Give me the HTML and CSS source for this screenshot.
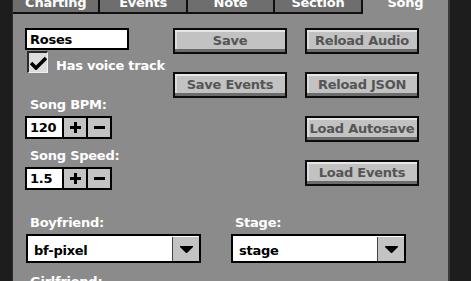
FILE: index.html
```html
<!DOCTYPE html>
<html>
<head>
<meta charset="utf-8">
<link rel="stylesheet" href="styles.css">
</head>
<body>
<div class="panel">
  <div class="tabs">
    <div class="tab"><span>Charting</span></div>
    <div class="tab"><span>Events</span></div>
    <div class="tab"><span>Note</span></div>
    <div class="tab"><span>Section</span></div>
    <div class="tab active"><span>Song</span></div>
  </div>
  <div class="body">
    <div class="top">
      <div class="col-left">
        <div class="textbox">Roses</div>
        <div class="check-row">
          <span class="checkbox">
            <svg width="17" height="14" viewBox="0 0 17 14"><path d="M1 7 L6 12 L16 2" fill="none" stroke="#000" stroke-width="3.6" stroke-linejoin="miter"/></svg>
          </span>
          <span class="label check-label">Has voice track</span>
        </div>
        <div class="label field-label first">Song BPM:</div>
        <div class="stepper">
          <div class="num">120</div>
          <div class="step"><svg width="11" height="11" viewBox="0 0 11 11"><path d="M4 0h3v4h4v3H7v4H4V7H0V4h4z" fill="#000"/></svg></div>
          <div class="step"><svg width="11" height="11" viewBox="0 0 11 11"><path d="M0 4h11v3H0z" fill="#000"/></svg></div>
        </div>
        <div class="label field-label">Song Speed:</div>
        <div class="stepper">
          <div class="num">1.5</div>
          <div class="step"><svg width="11" height="11" viewBox="0 0 11 11"><path d="M4 0h3v4h4v3H7v4H4V7H0V4h4z" fill="#000"/></svg></div>
          <div class="step"><svg width="11" height="11" viewBox="0 0 11 11"><path d="M0 4h11v3H0z" fill="#000"/></svg></div>
        </div>
      </div>
      <div class="col-btns">
        <div class="btn">Save</div>
        <div class="btn">Save Events</div>
      </div>
      <div class="col-btns">
        <div class="btn">Reload Audio</div>
        <div class="btn">Reload JSON</div>
        <div class="btn">Load Autosave</div>
        <div class="btn">Load Events</div>
      </div>
    </div>
    <div class="bottom">
      <div class="dd-field">
        <div class="label dd-label">Boyfriend:</div>
        <div class="dropdown">
          <div class="dd-value">bf-pixel</div>
          <div class="dd-btn"><svg width="13" height="7" viewBox="0 0 13 7"><path d="M0 0h13v1l-6 6h-1l-6-6z" fill="#000"/></svg></div>
        </div>
      </div>
      <div class="dd-field">
        <div class="label dd-label">Stage:</div>
        <div class="dropdown">
          <div class="dd-value">stage</div>
          <div class="dd-btn"><svg width="13" height="7" viewBox="0 0 13 7"><path d="M0 0h13v1l-6 6h-1l-6-6z" fill="#000"/></svg></div>
        </div>
      </div>
    </div>
    <div class="label dd-label gf">Girlfriend:</div>
  </div>
</div>
</body>
</html>
```
FILE: styles.css
```css
* { box-sizing: border-box; }
html, body {
  margin: 0;
  padding: 0;
  width: 471px;
  height: 281px;
  overflow: hidden;
  background: #1d1d1d;
  font-family: "DejaVu Sans", sans-serif;
  font-weight: bold;
  font-size: 13px;
  letter-spacing: -0.25px;
}
.panel {
  margin-left: 12px;
  width: 438px;
  height: 281px;
  background: #8b8b8b;
  border-left: 1px solid #2e2e2e;
  border-right: 2px solid #3a3a3a;
}
.tabs {
  display: flex;
  height: 14px;
}
.tab {
  flex: 1;
  background: #6e6e6e;
  border-right: 2px solid #101010;
  border-bottom: 2px solid #101010;
  color: #fff;
  text-align: center;
  line-height: 5px;
  overflow: visible;
}
.tab.active {
  background: #8b8b8b;
  border-right: none;
  border-bottom: none;
}
.body {
  padding: 14px 0 0 12px;
}
.top {
  display: flex;
  height: 162px;
}
.col-left {
  width: 148px;
  display: flex;
  flex-direction: column;
  align-items: flex-start;
}
.textbox {
  width: 104px;
  height: 22px;
  background: #fff;
  border: 2px solid #000;
  color: #000;
  padding-left: 3px;
  line-height: 19px;
}
.check-row {
  display: flex;
  align-items: center;
  margin-top: 1px;
  height: 22px;
}
.checkbox {
  margin-left: 2px;
  width: 21px;
  height: 22px;
  background: #dcdcdc;
  border-top: 2px solid #2a2a2a;
  border-left: 2px solid #2a2a2a;
  border-right: 1px solid #f0f0f0;
  border-bottom: 1px solid #f0f0f0;
  display: flex;
  align-items: center;
  justify-content: center;
}
.label {
  color: #fff;
  line-height: 14px;
}
.check-label {
  margin-left: 8px;
  margin-top: 8px;
}
.field-label {
  margin-top: 10px;
  margin-left: 5px;
}
.field-label.first {
  margin-top: 25px;
}
.stepper {
  display: flex;
  margin-top: 4px;
  height: 23px;
}
.num {
  width: 39px;
  background: #fff;
  border: 2px solid #000;
  color: #000;
  padding-left: 3px;
  line-height: 20px;
}
.step {
  width: 24px;
  background: #c3c3c3;
  border: 2px solid #000;
  border-left: none;
  display: flex;
  align-items: center;
  justify-content: center;
}
.col-btns {
  display: flex;
  flex-direction: column;
  gap: 18px;
  width: 114px;
  margin-right: 18px;
}
.btn {
  height: 26px;
  background: #c2c2c2;
  border: 2px solid #0c0c0c;
  box-shadow: inset 0 2px 0 #e6e6e6, inset 0 -3px 0 #6c6c6c, inset 2px 0 0 #dadada;
  color: #555;
  text-align: center;
  line-height: 21px;
}
.bottom {
  display: flex;
  gap: 30px;
  margin-top: 26px;
  margin-left: 1px;
}
.dd-label {
  margin-left: 4px;
}
.dropdown {
  margin-top: 4px;
  width: 175px;
  height: 29px;
  background: #fff;
  border: 2px solid #000;
  display: flex;
}
.dd-value {
  flex: 1;
  color: #000;
  padding-left: 6px;
  line-height: 30px;
}
.dd-btn {
  width: 27px;
  margin: 1px 0 0 0;
  background: #c3c3c3;
  border-left: 1px solid #444;
  display: flex;
  align-items: center;
  justify-content: center;
}
.gf {
  margin-top: 12px;
  margin-left: 5px;
}
```
